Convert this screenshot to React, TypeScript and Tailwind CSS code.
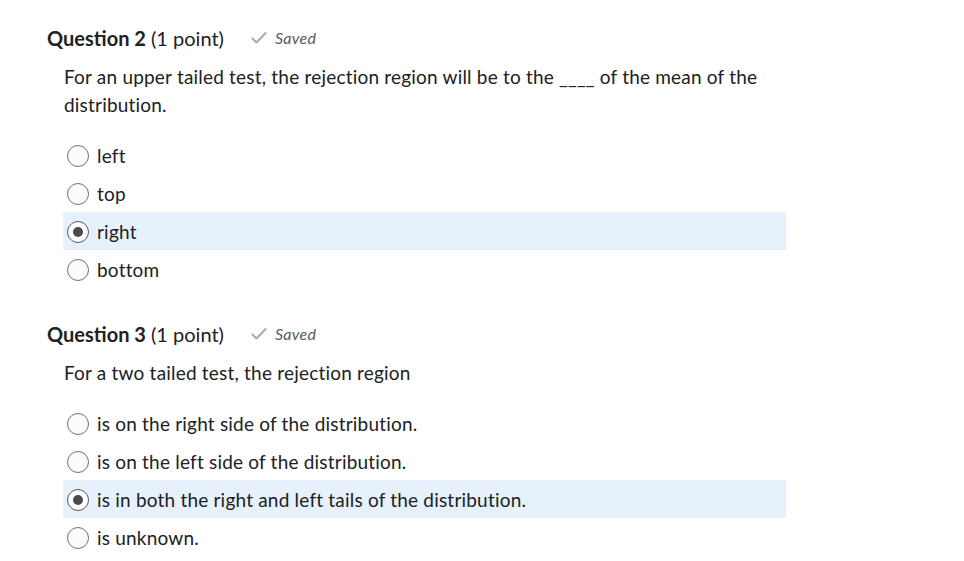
import React from 'react';

interface Question {
  number: number;
  text: string;
  options: string[];
  selected: number;
}

const questions: Question[] = [
  {
    number: 2,
    text: 'For an upper tailed test, the rejection region will be to the ____ of the mean of the distribution.',
    options: ['left', 'top', 'right', 'bottom'],
    selected: 2,
  },
  {
    number: 3,
    text: 'For a two tailed test, the rejection region',
    options: [
      'is on the right side of the distribution.',
      'is on the left side of the distribution.',
      'is in both the right and left tails of the distribution.',
      'is unknown.',
    ],
    selected: 2,
  },
];

const Radio: React.FC<{ checked: boolean }> = ({ checked }) =>
  checked ? (
    <span className="w-[22px] h-[22px] rounded-full border-[1.5px] border-[#565a5c] bg-white flex items-center justify-center shrink-0">
      <span className="w-[10px] h-[10px] rounded-full bg-[#494c4e]" />
    </span>
  ) : (
    <span className="w-[22px] h-[22px] rounded-full border border-[#6e7376] bg-[#f9fbff] shrink-0" />
  );

const QuestionBlock: React.FC<{ q: Question; first?: boolean }> = ({ q, first }) => (
  <div className={first ? '' : 'mt-[32px]'}>
    <div className="flex items-center h-[28px]">
      <h2 className="text-[20px] text-[#202122]">
        <span className="font-bold">Question {q.number}</span> (1 point)
      </h2>
      <span className="ml-[27px] flex items-center gap-[8px] text-[#565a5c]">
        <svg width="16" height="14" viewBox="0 0 16 14" fill="none">
          <path d="M1.5 7.5 L5.5 11.5 L14.5 2" stroke="#a8abad" strokeWidth="2" strokeLinecap="round" strokeLinejoin="round" />
        </svg>
        <span className="italic text-[16px] tracking-[0.3px]">Saved</span>
      </span>
    </div>
    <p className="mt-[11px] ml-[17px] text-[19px] tracking-[0.2px] leading-[28px] text-[#202122] max-w-[710px]">{q.text}</p>
    <div className="mt-[17px] ml-[16px] w-[723px]">
      {q.options.map((opt, i) => (
        <div
          key={opt}
          className={`h-[38px] flex items-center gap-[8px] pl-[4px] pt-[1px] ${i === q.selected ? 'bg-[#e6f1fc]' : ''}`}
        >
          <Radio checked={i === q.selected} />
          <span className="text-[19px] tracking-[0.2px] text-[#202122] leading-[28px]">{opt}</span>
        </div>
      ))}
    </div>
  </div>
);

const App: React.FC = () => {
  return (
    <div className="min-h-screen bg-white pt-[24px] pl-[47px]" style={{ fontFamily: 'Lato, "Noto Sans", sans-serif' }}>
      {questions.map((q, i) => (
        <QuestionBlock key={q.number} q={q} first={i === 0} />
      ))}
    </div>
  );
};

export default App;
